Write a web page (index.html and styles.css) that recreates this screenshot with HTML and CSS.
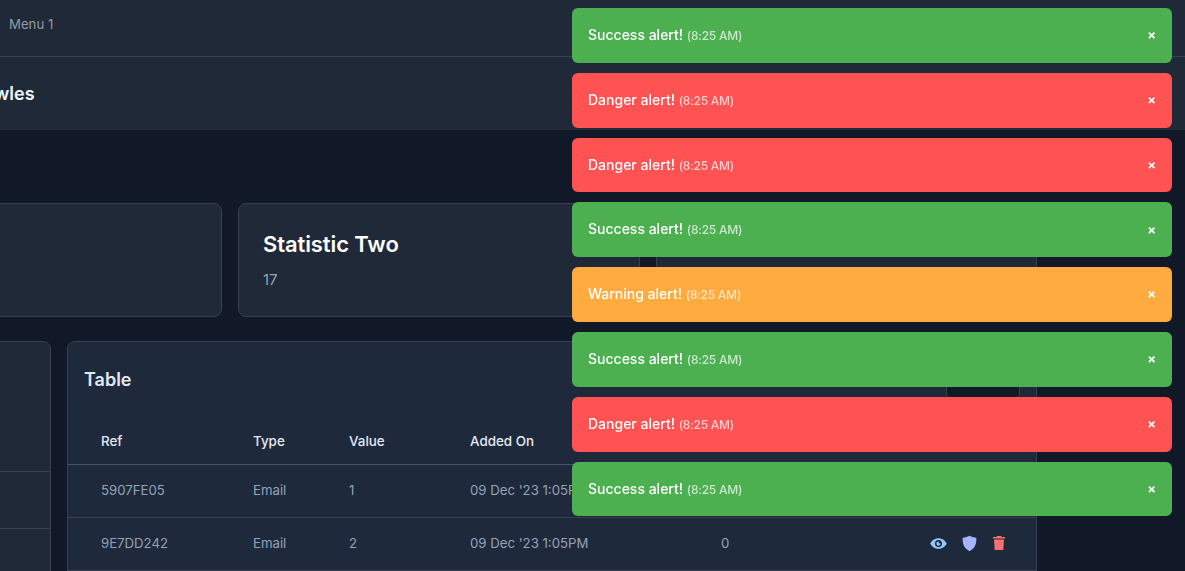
FILE: index.html
```html
<!DOCTYPE html>
<html lang="en">
  <head>
    <meta charset="UTF-8" />
    <meta name="viewport" content="width=device-width, initial-scale=1.0" />
    <title>Dashboard</title>
    <link rel="stylesheet" href="styles.css">
  </head>

  <body>
    <div class="main">
      <div class="topbar">
        <span class="menu-link">Menu 1</span>
      </div>
      <div class="page-header">
        <h1>Welcome, J Rowles</h1>
      </div>

      <div class="content">
        <div class="stats">
          <div class="card stat">
            <h2>Statistic One</h2>
            <p>42</p>
          </div>
          <div class="card stat">
            <h2>Statistic Two</h2>
            <p>17</p>
          </div>
          <div class="card stat">
            <h2>Statistic Three</h2>
            <p>8</p>
          </div>
        </div>

        <div class="panels">
          <div class="card side-list">
            <div class="side-title">List</div>
            <div class="side-row">One</div>
            <div class="side-row">Two</div>
          </div>

          <div class="card table-card">
            <div class="table-head">
              <h3>Table</h3>
              <button class="add-btn" type="button">Add</button>
            </div>
            <table>
              <thead>
                <tr>
                  <th class="col-ref">Ref</th>
                  <th class="col-type">Type</th>
                  <th class="col-value">Value</th>
                  <th class="col-date">Added On</th>
                  <th>Uses</th>
                  <th></th>
                </tr>
              </thead>
              <tbody>
                <tr>
                  <td>5907FE05</td>
                  <td>Email</td>
                  <td>1</td>
                  <td>09 Dec '23 1:05PM</td>
                  <td>0</td>
                  <td class="actions">
                    <svg class="icon-eye" width="17" height="17" viewBox="0 0 16 16"><path fill-rule="evenodd" d="M8 3C4.6 3 1.6 5.100.2 8c1.400 2.900 4.400 5 7.800 5s6.400-2.100 7.800-5C14.400 5.100 11.400 3 8 3zm0 8.300a3.300 3.300 0 1 1 0-6.600 3.300 3.300 0 0 1 0 6.600zM8 6a2 2 0 1 0 2 2c-.6.300-1.600-.1-1.700-.9C8.100 6.700 8.300 6.300 8 6z"/></svg>
                    <svg class="icon-shield" width="17" height="17" viewBox="0 0 16 16"><path d="M8 .8c2 1.100 3.800 1.700 6.400 1.900.4 5.600-1.400 10.300-6.400 12.600C3 13 1.200 8.300 1.600 2.700 4.200 2.500 6 1.900 8 .8z"/></svg>
                    <svg class="icon-trash" width="16" height="16" viewBox="0 0 16 16"><path d="M5.800 1h4.400l.5 1h3.300v1.600H2V2h3.300zM3 4.600h10l-.7 10.400H3.700z"/></svg>
                  </td>
                </tr>
                <tr>
                  <td>9E7DD242</td>
                  <td>Email</td>
                  <td>2</td>
                  <td>09 Dec '23 1:05PM</td>
                  <td>0</td>
                  <td class="actions">
                    <svg class="icon-eye" width="17" height="17" viewBox="0 0 16 16"><path fill-rule="evenodd" d="M8 3C4.6 3 1.6 5.100.2 8c1.400 2.900 4.400 5 7.800 5s6.400-2.100 7.800-5C14.400 5.100 11.400 3 8 3zm0 8.300a3.300 3.300 0 1 1 0-6.600 3.300 3.300 0 0 1 0 6.600zM8 6a2 2 0 1 0 2 2c-.6.300-1.600-.1-1.700-.9C8.100 6.700 8.300 6.300 8 6z"/></svg>
                    <svg class="icon-shield" width="17" height="17" viewBox="0 0 16 16"><path d="M8 .8c2 1.100 3.800 1.700 6.400 1.900.4 5.600-1.400 10.300-6.400 12.600C3 13 1.200 8.300 1.600 2.700 4.200 2.500 6 1.900 8 .8z"/></svg>
                    <svg class="icon-trash" width="16" height="16" viewBox="0 0 16 16"><path d="M5.800 1h4.400l.5 1h3.300v1.600H2V2h3.300zM3 4.600h10l-.7 10.400H3.700z"/></svg>
                  </td>
                </tr>
              </tbody>
            </table>
          </div>
        </div>
      </div>
    </div>

    <div class="toasts">
      <div class="toast success"><span>Success alert! <small>(8:25 AM)</small></span><span class="close">×</span></div>
      <div class="toast danger"><span>Danger alert! <small>(8:25 AM)</small></span><span class="close">×</span></div>
      <div class="toast danger"><span>Danger alert! <small>(8:25 AM)</small></span><span class="close">×</span></div>
      <div class="toast success"><span>Success alert! <small>(8:25 AM)</small></span><span class="close">×</span></div>
      <div class="toast warning"><span>Warning alert! <small>(8:25 AM)</small></span><span class="close">×</span></div>
      <div class="toast success"><span>Success alert! <small>(8:25 AM)</small></span><span class="close">×</span></div>
      <div class="toast danger"><span>Danger alert! <small>(8:25 AM)</small></span><span class="close">×</span></div>
      <div class="toast success"><span>Success alert! <small>(8:25 AM)</small></span><span class="close">×</span></div>
    </div>
  </body>
</html>
```

FILE: styles.css
```css
body {
  margin: 0;
  height: 571px;
  overflow: hidden;
  font-family: "Inter", "Open Sans", sans-serif;
  font-size: 14px;
  background-color: #111827;
  color: #fff;
}

.main {
  width: 1381px;
  margin-left: -196px;
}

.topbar {
  height: 56px;
  padding-left: 205px;
  display: flex;
  align-items: center;
  background-color: #1f2937;
  border-bottom: 1px solid #374151;
}

.menu-link {
  font-size: 13.2px;
  color: #8f9bab;
  margin-top: -8px;
}

.page-header {
  height: 73px;
  display: flex;
  align-items: center;
  background-color: #1f2937;
}

.page-header h1 {
  margin: 0 0 0 62px;
  font-size: 18px;
  font-weight: 600;
  color: #f1f5f9;
}

.content {
  padding: 73px 148px 0 16px;
}

.card {
  background-color: #1f2937;
  border: 1px solid #374151;
  border-radius: 8px;
  box-sizing: border-box;
}

.stats {
  display: grid;
  grid-template-columns: 402px 402px 1fr;
  gap: 16px;
  margin-bottom: 24px;
}

.stat {
  height: 114px;
  padding: 25px 24px;
}

.stat h2 {
  margin: 0 0 11px;
  font-size: 22px;
  line-height: 30px;
  font-weight: 600;
  letter-spacing: -0.1px;
}

.stat p {
  margin: 0;
  font-size: 15px;
  line-height: 20px;
  color: #94a3b8;
}

.panels {
  display: grid;
  grid-template-columns: 1fr 970px;
  gap: 16px;
}

.side-title {
  height: 129px;
  padding: 20px;
  box-sizing: border-box;
}

.side-row {
  height: 57px;
  padding: 16px 20px;
  box-sizing: border-box;
  border-top: 1px solid #374151;
  color: #94a3b8;
}

.table-card {
  background-color: #1e293b;
}

.table-head {
  height: 75px;
  padding: 0 16px;
  display: flex;
  align-items: center;
  justify-content: space-between;
}

.table-head h3 {
  margin: 0;
  font-size: 18px;
  font-weight: 600;
  color: #e2e8f0;
}

.add-btn {
  width: 74px;
  height: 38px;
  background-color: #111827;
  border: 1px solid #374151;
  border-radius: 6px;
  color: #e2e8f0;
  font-family: inherit;
}

table {
  width: 100%;
  table-layout: fixed;
  border-collapse: collapse;
}

th,
td {
  height: 50px;
  padding: 0 0 2px 33px;
  text-align: left;
  font-size: 13.2px;
  font-weight: 400;
  border-bottom: 1px solid #374151;
}

th {
  height: 47px;
  padding-bottom: 0;
  font-size: 13.4px;
  font-weight: 500;
  color: #e2e8f0;
  border-bottom-color: #475569;
}

td {
  color: #94a3b8;
}

.col-ref {
  width: 119px;
}

.col-type {
  width: 63px;
}

.col-value {
  width: 88px;
}

.col-date {
  width: 218px;
}

.actions {
  padding-right: 29px;
  text-align: right;
  white-space: nowrap;
}

.actions svg {
  vertical-align: middle;
  fill: currentColor;
  margin-left: 9px;
}

.actions .icon-shield {
  margin-left: 11px;
}

.icon-eye {
  color: #93c5fd;
}

.icon-shield {
  color: #a5b4fc;
}

.icon-trash {
  color: #f87171;
}

.toasts {
  position: fixed;
  top: 8px;
  left: 572px;
  width: 600px;
  display: flex;
  flex-direction: column;
  gap: 10px;
}

.toast {
  height: 54.8px;
  box-sizing: border-box;
  padding: 0 16px 1.7px;
  display: flex;
  align-items: center;
  justify-content: space-between;
  border-radius: 6px;
  font-size: 14px;
  font-weight: 500;
}

.toast small {
  font-size: 12px;
  letter-spacing: -0.25px;
  opacity: 0.7;
}

.close {
  font-size: 13px;
  font-weight: 700;
  padding-top: 1.4px;
}

.success {
  background-color: #4caf50;
}

.danger {
  background-color: #ff5252;
}

.warning {
  background-color: #ffab40;
}
```
